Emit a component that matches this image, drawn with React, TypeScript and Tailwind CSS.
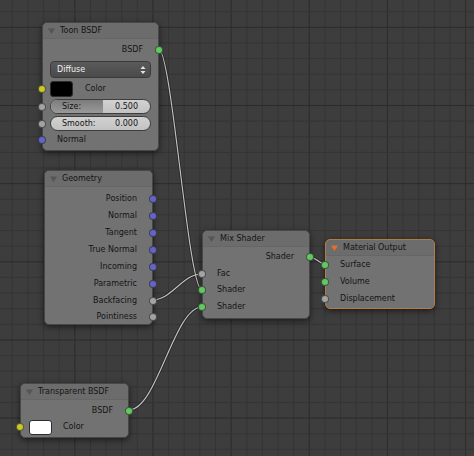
import React from "react";

type SocketColor = "green" | "yellow" | "blue" | "grey";

const socketClass: Record<SocketColor, string> = {
  green: "bg-[#62c862]",
  yellow: "bg-[#c8c82a]",
  blue: "bg-[#6464c8]",
  grey: "bg-[#a3a3a3]",
};

const Socket = ({ color, side }: { color: SocketColor; side: "left" | "right" }) => (
  <span
    className={`absolute top-1/2 h-[8px] w-[8px] -translate-y-1/2 rounded-full border border-[#2b2b2b]/70 ${socketClass[color]} ${
      side === "left" ? "left-[-5px]" : "right-[-5px]"
    }`}
  />
);

interface RowProps {
  label: string;
  side: "left" | "right";
  color?: SocketColor;
  h?: string;
  children?: React.ReactNode;
}

// one socket row: outputs are right aligned, inputs left aligned
const Row = ({ label, side, color, h = "h-[17px]", children }: RowProps) => (
  <div className={`relative flex items-center ${h} ${side === "right" ? "justify-end pr-[15px]" : "pl-[14px]"}`}>
    {children}
    {label && <span className="leading-none">{label}</span>}
    {color && <Socket color={color} side={side} />}
  </div>
);

interface NodeProps {
  title: string;
  pos: string;
  w: string;
  output?: boolean;
  children: React.ReactNode;
}

const Node = ({ title, pos, w, output, children }: NodeProps) => (
  <div
    className={`absolute ${pos} ${w} rounded-[5px] border ${
      output ? "border-[#b67b42]" : "border-[#474747]"
    } bg-[#727272] text-[8px] text-[#141414] shadow-[0_2px_6px_rgba(0,0,0,0.55)]`}
  >
    <div className="flex h-[16px] items-center rounded-t-[5px] border-b border-[#666666] bg-[#6c6c6c] pl-[5px]">
      <svg width="7" height="6" viewBox="0 0 7 6" className="shrink-0">
        <path d="M0 0.5 L7 0.5 L3.5 6 Z" fill={output ? "#e0702a" : "#555555"} />
      </svg>
      <span className="ml-[5px] leading-none">{title}</span>
    </div>
    {children}
  </div>
);

const Slider = ({ label, value, fill }: { label: string; value: string; fill: number }) => (
  <div className="relative mx-[7px] h-[15px] overflow-hidden rounded-full border border-[#3d3d3d] bg-[linear-gradient(#d2d2d2,#c2c2c2)]">
    <div
      className="absolute inset-y-0 left-0 bg-[linear-gradient(#7c7c7c,#999999)]"
      style={{ width: `${fill}%` }}
    />
    <div className="relative flex h-full items-center justify-between pl-[11px] pr-[12px] leading-none">
      <span>{label}</span>
      <span>{value}</span>
    </div>
  </div>
);

const Grid = () => {
  const lines: React.ReactNode[] = [];
  for (let k = 0; k < 31; k++) {
    const x = 12.3 + 15.63 * k;
    const major = (k - 19) % 5 === 0;
    lines.push(
      <line key={`v${k}`} x1={x} y1={0} x2={x} y2={456} stroke={major ? "#2c2c2c" : "#353535"} strokeWidth={1} />
    );
  }
  for (let k = 0; k < 30; k++) {
    const y = 11.7 + 15.63 * k;
    const major = (k - 1) % 5 === 0;
    lines.push(
      <line key={`h${k}`} x1={0} y1={y} x2={474} y2={y} stroke={major ? "#2c2c2c" : "#353535"} strokeWidth={1} />
    );
  }
  return (
    <svg className="absolute inset-0" width="474" height="456">
      {lines}
    </svg>
  );
};

const wire = (x1: number, y1: number, x2: number, y2: number, h: number) =>
  `M${x1} ${y1} C${x1 + h} ${y1} ${x2 - h} ${y2} ${x2} ${y2}`;

const Wires = () => {
  const paths = [
    wire(158, 48, 202, 290, 14),
    wire(152, 300, 202, 274, 20),
    wire(129, 410, 202, 307, 28),
    wire(310, 257, 325, 264, 5),
  ];
  return (
    <svg className="absolute inset-0" width="474" height="456" fill="none">
      {paths.map((d, i) => (
        <path key={`s${i}`} d={d} stroke="#1e1e1e" strokeOpacity={0.6} strokeWidth={3} />
      ))}
      {paths.map((d, i) => (
        <path key={`w${i}`} d={d} stroke="#c4c4c4" strokeWidth={1.1} />
      ))}
    </svg>
  );
};

export default function App() {
  return (
    <div className="relative h-[456px] w-[474px] overflow-hidden bg-[#3d3d3d] font-['DejaVu_Sans',sans-serif]">
      <Grid />
      <Wires />

      <Node title="Toon BSDF" pos="left-[42px] top-[22px]" w="w-[117px]">
        <div className="pt-[2px]">
          <Row label="BSDF" side="right" color="green" />
        </div>
        <div className="mx-[7px] mt-[3px] flex h-[17px] items-center justify-between rounded-[4px] border border-[#3a3a3a] bg-[linear-gradient(#5a5a5a,#4a4a4a)] pl-[6px] pr-[4px] text-[#f2f2f2]">
          <span className="leading-none">Diffuse</span>
          <svg width="6" height="10" viewBox="0 0 6 10">
            <path d="M0.5 4 L3 1 L5.5 4 Z" fill="#e6e6e6" />
            <path d="M0.5 6 L3 9 L5.5 6 Z" fill="#e6e6e6" />
          </svg>
        </div>
        <div className="relative mt-[3px] flex h-[16px] items-center pl-[7px]">
          <span className="h-[16px] w-[23px] rounded-[3px] border border-[#2c2c2c] bg-black" />
          <span className="ml-[12px] leading-none">Color</span>
          <Socket color="yellow" side="left" />
        </div>
        <div className="relative mt-[2px]">
          <Slider label="Size:" value="0.500" fill={53} />
          <Socket color="grey" side="left" />
        </div>
        <div className="relative mt-[2px]">
          <Slider label="Smooth:" value="0.000" fill={0} />
          <Socket color="grey" side="left" />
        </div>
        <Row label="Normal" side="left" color="blue" />
        <div className="h-[2px]" />
      </Node>

      <Node title="Geometry" pos="left-[44px] top-[170px]" w="w-[109px]">
        <div className="pt-[3px]">
          <Row label="Position" side="right" color="blue" />
          <Row label="Normal" side="right" color="blue" />
          <Row label="Tangent" side="right" color="blue" />
          <Row label="True Normal" side="right" color="blue" />
          <Row label="Incoming" side="right" color="blue" />
          <Row label="Parametric" side="right" color="blue" />
          <Row label="Backfacing" side="right" color="grey" />
          <Row label="Pointiness" side="right" color="grey" h="h-[15px]" />
        </div>
      </Node>

      <Node title="Mix Shader" pos="left-[202px] top-[230px]" w="w-[108px]">
        <div className="pb-[3px] pt-[2px]">
          <Row label="Shader" side="right" color="green" h="h-[16.5px]" />
          <Row label="Fac" side="left" color="grey" h="h-[16.5px]" />
          <Row label="Shader" side="left" color="green" h="h-[16.5px]" />
          <Row label="Shader" side="left" color="green" h="h-[16.5px]" />
        </div>
      </Node>

      <Node title="Material Output" pos="left-[325px] top-[239px]" w="w-[110px]" output>
        <div className="pb-[1px]">
          <Row label="Surface" side="left" color="green" />
          <Row label="Volume" side="left" color="green" />
          <Row label="Displacement" side="left" color="grey" />
        </div>
      </Node>

      <Node title="Transparent BSDF" pos="left-[20px] top-[383px]" w="w-[109px]">
        <div className="pb-[2px] pt-[2px]">
          <Row label="BSDF" side="right" color="green" />
          <div className="relative flex h-[16px] items-center pl-[8px]">
            <span className="h-[15px] w-[23px] rounded-[3px] border border-[#2c2c2c] bg-white" />
            <span className="ml-[11px] leading-none">Color</span>
            <Socket color="yellow" side="left" />
          </div>
        </div>
      </Node>
    </div>
  );
}
